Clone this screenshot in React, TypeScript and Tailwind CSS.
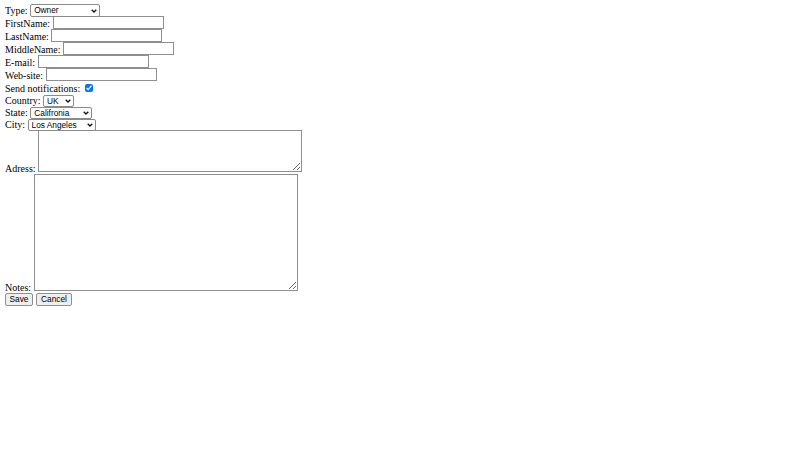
const inputCls = "h-[13px] w-[111px] border border-[#8f8f8f] bg-white";

function Select({ w, value }: { w: string; value: string }) {
  return (
    <span className={`relative mt-[2px] inline-flex ${w}`}>
      <select
        className="h-[12px] w-full appearance-none rounded-[2px] border border-[#8a8a8a] bg-white pl-[3px] pr-[9px] font-['Liberation_Sans',Arial,sans-serif] text-[8.3px] leading-[10px] text-black"
        defaultValue={value}
      >
        <option>{value}</option>
      </select>
      <svg
        className="pointer-events-none absolute right-[3px] top-[4px]"
        width="6"
        height="4"
        viewBox="0 0 6 4"
        fill="none"
      >
        <path d="M0.7 0.7 L3 3 L5.3 0.7" stroke="#111" strokeWidth="1.3" />
      </svg>
    </span>
  );
}

function Row({ label, h = 13, children }: { label: string; h?: number; children: React.ReactNode }) {
  return (
    <div className={`flex items-center gap-[2.5px] ${h === 12 ? "h-[12px]" : "h-[13px]"}`}>
      <span className="pt-[2px]">{label}</span>
      {children}
    </div>
  );
}

export default function App() {
  return (
    <div className="min-h-[450px] w-[800px] bg-white pl-[5px] pt-[4px] font-['Liberation_Serif','Times_New_Roman',serif] text-[10px] leading-[11.5px] text-black">
      <div className="flex h-[12px] items-start gap-[2.5px]">
        <span className="pt-[1px]">Type:</span>
        <span className="relative inline-flex w-[70px]">
          <select
            className="h-[13px] w-full appearance-none rounded-[2px] border border-[#8a8a8a] bg-white pl-[3px] pr-[9px] font-['Liberation_Sans',Arial,sans-serif] text-[8.3px] leading-[11px] text-black"
            defaultValue="Owner"
          >
            <option>Owner</option>
          </select>
          <svg className="pointer-events-none absolute right-[3px] top-[5px]" width="6" height="4" viewBox="0 0 6 4" fill="none">
            <path d="M0.7 0.7 L3 3 L5.3 0.7" stroke="#111" strokeWidth="1.3" />
          </svg>
        </span>
      </div>
      <Row label="FirstName:">
        <input type="text" className={inputCls} />
      </Row>
      <Row label="LastName:">
        <input type="text" className={inputCls} />
      </Row>
      <Row label="MiddleName:">
        <input type="text" className={inputCls} />
      </Row>
      <Row label="E-mail:">
        <input type="text" className={inputCls} />
      </Row>
      <Row label="Web-site:">
        <input type="text" className={inputCls} />
      </Row>
      <Row label="Send notifications:">
        <input type="checkbox" defaultChecked className="ml-[2px] mt-[1px] h-[8px] w-[8px] accent-[#0075ff]" />
      </Row>
      <Row label="Country:" h={12}>
        <Select w="w-[31px]" value="UK" />
      </Row>
      <Row label="State:" h={12}>
        <Select w="w-[62px]" value="Califronia" />
      </Row>
      <Row label="City:" h={12}>
        <Select w="w-[68px]" value="Los Angeles" />
      </Row>
      <div className="flex h-[42px] items-end gap-[2.5px]">
        <span className="translate-y-[2px]">Adress:</span>
        <textarea className="h-[42px] w-[264px] border border-[#8f8f8f] bg-white" />
      </div>
      <div className="mt-[2px] flex h-[117px] items-end gap-[2.5px]">
        <span className="translate-y-[2px]">Notes:</span>
        <textarea className="h-[117px] w-[264px] border border-[#8f8f8f] bg-white" />
      </div>
      <div className="mt-[2px] flex h-[13px] items-center gap-[3px] font-['Liberation_Sans',Arial,sans-serif] text-[8.3px]">
        <button className="h-[13px] w-[28px] rounded-[2px] border border-[#8f8f8f] bg-[#efefef]">Save</button>
        <button className="h-[13px] w-[36px] rounded-[2px] border border-[#8f8f8f] bg-[#efefef]">Cancel</button>
      </div>
    </div>
  );
}
